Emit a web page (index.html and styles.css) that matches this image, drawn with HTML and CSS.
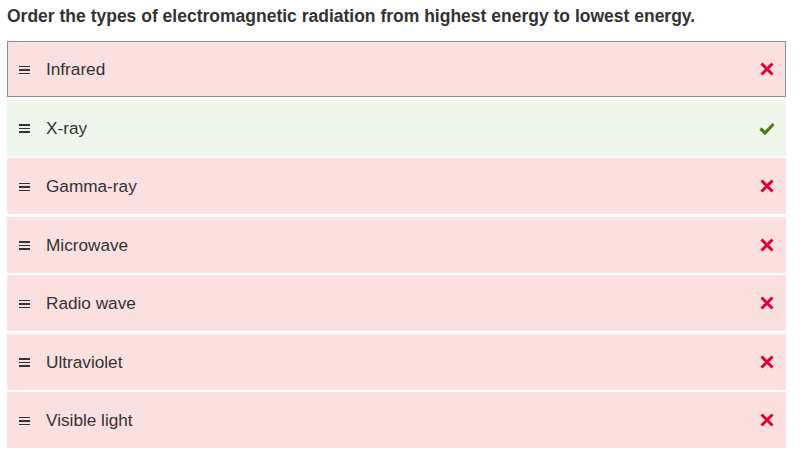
FILE: index.html
```html
<!DOCTYPE html>
<html>
<head>
<meta charset="utf-8">
<link rel="stylesheet" href="styles.css">
</head>
<body>
<div class="question">
  <p class="prompt">Order the types of electromagnetic radiation from highest energy to lowest energy.</p>
  <ul class="list">
    <li class="item wrong current">
      <span class="handle"><i></i><i></i><i></i></span>
      <span class="label">Infrared</span>
      <svg class="mark" width="16" height="16" viewBox="0 0 16 16"><path d="M2.5 2.5 L13.5 13.5 M13.5 2.5 L2.5 13.5" stroke="#e0002e" stroke-width="3" fill="none"/></svg>
    </li>
    <li class="item right">
      <span class="handle"><i></i><i></i><i></i></span>
      <span class="label">X-ray</span>
      <svg class="mark" width="16" height="16" viewBox="0 0 16 16"><path d="M1.5 8.5 L6 13 L14.5 4" stroke="#4a7a14" stroke-width="3.2" fill="none"/></svg>
    </li>
    <li class="item wrong">
      <span class="handle"><i></i><i></i><i></i></span>
      <span class="label">Gamma-ray</span>
      <svg class="mark" width="16" height="16" viewBox="0 0 16 16"><path d="M2.5 2.5 L13.5 13.5 M13.5 2.5 L2.5 13.5" stroke="#e0002e" stroke-width="3" fill="none"/></svg>
    </li>
    <li class="item wrong">
      <span class="handle"><i></i><i></i><i></i></span>
      <span class="label">Microwave</span>
      <svg class="mark" width="16" height="16" viewBox="0 0 16 16"><path d="M2.5 2.5 L13.5 13.5 M13.5 2.5 L2.5 13.5" stroke="#e0002e" stroke-width="3" fill="none"/></svg>
    </li>
    <li class="item wrong">
      <span class="handle"><i></i><i></i><i></i></span>
      <span class="label">Radio wave</span>
      <svg class="mark" width="16" height="16" viewBox="0 0 16 16"><path d="M2.5 2.5 L13.5 13.5 M13.5 2.5 L2.5 13.5" stroke="#e0002e" stroke-width="3" fill="none"/></svg>
    </li>
    <li class="item wrong">
      <span class="handle"><i></i><i></i><i></i></span>
      <span class="label">Ultraviolet</span>
      <svg class="mark" width="16" height="16" viewBox="0 0 16 16"><path d="M2.5 2.5 L13.5 13.5 M13.5 2.5 L2.5 13.5" stroke="#e0002e" stroke-width="3" fill="none"/></svg>
    </li>
    <li class="item wrong">
      <span class="handle"><i></i><i></i><i></i></span>
      <span class="label">Visible light</span>
      <svg class="mark" width="16" height="16" viewBox="0 0 16 16"><path d="M2.5 2.5 L13.5 13.5 M13.5 2.5 L2.5 13.5" stroke="#e0002e" stroke-width="3" fill="none"/></svg>
    </li>
  </ul>
</div>
</body>
</html>
```
FILE: styles.css
```css
html, body {
  margin: 0;
  padding: 0;
  background: #ffffff;
}
body {
  font-family: "Liberation Sans", Arial, sans-serif;
  color: #333333;
}
.question {
  padding: 6px 14px 0 7px;
}
.prompt {
  margin: 0;
  font-size: 17.5px;
  font-weight: bold;
  line-height: 21px;
  color: #333333;
}
.list {
  list-style: none;
  margin: 14px 0 0 0;
  padding: 0;
  display: flex;
  flex-direction: column;
  gap: 2.5px;
}
.item {
  box-sizing: border-box;
  height: 56px;
  display: flex;
  align-items: center;
  padding: 0 11px 0 12px;
}
.item.wrong {
  background: #fbe0e0;
}
.item.right {
  background: #eff6ec;
}
.item.current {
  border: 1px solid #8c8c8c;
  padding: 0 10px 0 11px;
}
.handle {
  width: 11px;
  display: flex;
  flex-direction: column;
  gap: 1.8px;
  margin-right: 16px;
  margin-top: 2px;
}
.handle i {
  display: block;
  height: 1.6px;
  background: #333333;
}
.label {
  flex: 1;
  font-size: 17.2px;
  line-height: 20px;
}
.mark {
  display: block;
}
```
